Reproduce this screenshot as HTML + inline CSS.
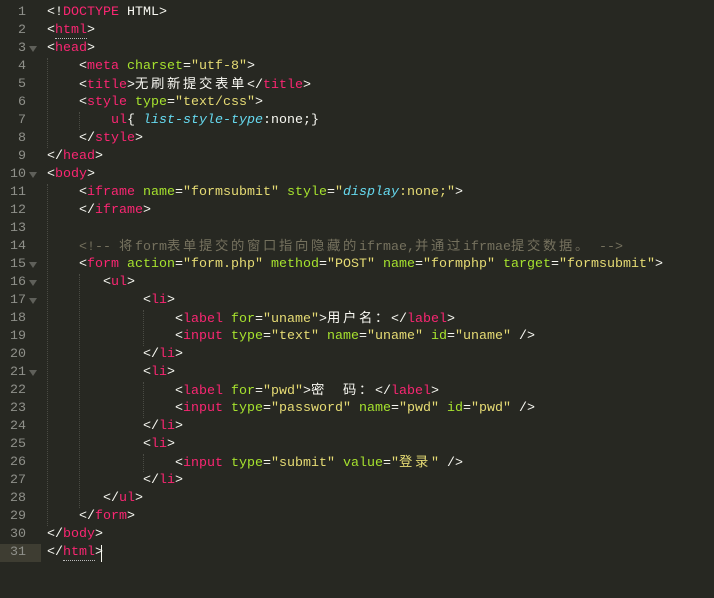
<!DOCTYPE html>
<html><head><meta charset="utf-8">
<style>
html,body{margin:0;padding:0;background:#272822;width:714px;height:598px;overflow:hidden}
body{position:relative;font-family:"Liberation Mono","Noto Sans CJK SC",monospace;font-size:13.33px}
.ln{position:absolute;left:0;width:26px;text-align:right;color:#8f908a;height:18px;line-height:18px}
.f{position:absolute;left:29px;width:0;height:0;border-left:4px solid transparent;border-right:4px solid transparent;border-top:6px solid #5f605a}
.l{position:absolute;height:18px;line-height:18px;white-space:pre;color:#f8f8f2}
.t{color:#f92672}.a{color:#a6e22e}.s{color:#e6db74}.c{color:#75715e}.p{color:#66d9ef;font-style:italic}
.k{font-family:"Noto Sans CJK SC",sans-serif;letter-spacing:2.67px;line-height:13px}
.g{position:absolute;width:0;border-left:1px dotted #4a4b44}
.u{border-bottom:1px dotted #bbb}
</style></head><body>
<div style="position:absolute;left:0;top:544px;width:41px;height:18px;background:#3e3d32"></div>
<div class="g" style="left:47px;top:58px;height:90px"></div>
<div class="g" style="left:79px;top:112px;height:18px"></div>
<div class="g" style="left:47px;top:184px;height:342px"></div>
<div class="g" style="left:79px;top:274px;height:234px"></div>
<div class="g" style="left:143px;top:310px;height:36px"></div>
<div class="g" style="left:143px;top:382px;height:36px"></div>
<div class="g" style="left:143px;top:454px;height:18px"></div>
<div style="position:absolute;left:101px;top:545px;width:1px;height:17px;background:#f8f8f0"></div>

<div class="ln" style="top:4px">1</div><div class="ln" style="top:22px">2</div><div class="ln" style="top:40px">3</div><div class="ln" style="top:58px">4</div><div class="ln" style="top:76px">5</div><div class="ln" style="top:94px">6</div><div class="ln" style="top:112px">7</div><div class="ln" style="top:130px">8</div><div class="ln" style="top:148px">9</div><div class="ln" style="top:166px">10</div><div class="ln" style="top:184px">11</div><div class="ln" style="top:202px">12</div><div class="ln" style="top:220px">13</div><div class="ln" style="top:238px">14</div><div class="ln" style="top:256px">15</div><div class="ln" style="top:274px">16</div><div class="ln" style="top:292px">17</div><div class="ln" style="top:310px">18</div><div class="ln" style="top:328px">19</div><div class="ln" style="top:346px">20</div><div class="ln" style="top:364px">21</div><div class="ln" style="top:382px">22</div><div class="ln" style="top:400px">23</div><div class="ln" style="top:418px">24</div><div class="ln" style="top:436px">25</div><div class="ln" style="top:454px">26</div><div class="ln" style="top:472px">27</div><div class="ln" style="top:490px">28</div><div class="ln" style="top:508px">29</div><div class="ln" style="top:526px">30</div><div class="ln" style="top:544px">31</div>
<div class="f" style="top:46px"></div><div class="f" style="top:172px"></div><div class="f" style="top:262px"></div><div class="f" style="top:280px"></div><div class="f" style="top:298px"></div><div class="f" style="top:370px"></div>

<div class="l" style="left:47px;top:4px">&lt;!<span class="t">DOCTYPE</span> HTML&gt;</div>
<div class="l" style="left:47px;top:22px">&lt;<span class="t u">html</span>&gt;</div>
<div class="l" style="left:47px;top:40px">&lt;<span class="t">head</span>&gt;</div>
<div class="l" style="left:79px;top:58px">&lt;<span class="t">meta</span> <span class="a">charset</span>=<span class="s">"utf-8"</span>&gt;</div>
<div class="l" style="left:79px;top:76px">&lt;<span class="t">title</span>&gt;<span class="k">无刷新提交表单</span>&lt;/<span class="t">title</span>&gt;</div>
<div class="l" style="left:79px;top:94px">&lt;<span class="t">style</span> <span class="a">type</span>=<span class="s">"text/css"</span>&gt;</div>
<div class="l" style="left:111px;top:112px"><span class="t">ul</span>{ <span class="p">list-style-type</span>:none;}</div>
<div class="l" style="left:79px;top:130px">&lt;/<span class="t">style</span>&gt;</div>
<div class="l" style="left:47px;top:148px">&lt;/<span class="t">head</span>&gt;</div>
<div class="l" style="left:47px;top:166px">&lt;<span class="t">body</span>&gt;</div>
<div class="l" style="left:79px;top:184px">&lt;<span class="t">iframe</span> <span class="a">name</span>=<span class="s">"formsubmit"</span> <span class="a">style</span>=<span class="s">"<span class="p">display</span>:none;"</span>&gt;</div>
<div class="l" style="left:79px;top:202px">&lt;/<span class="t">iframe</span>&gt;</div>
<div class="l c" style="left:79px;top:238px">&lt;!-- <span class="k">将</span>form<span class="k">表单提交的窗口指向隐藏的</span>ifrmae,<span class="k">并通过</span>ifrmae<span class="k">提交数据。</span> --&gt;</div>
<div class="l" style="left:79px;top:256px">&lt;<span class="t">form</span> <span class="a">action</span>=<span class="s">"form.php"</span> <span class="a">method</span>=<span class="s">"POST"</span> <span class="a">name</span>=<span class="s">"formphp"</span> <span class="a">target</span>=<span class="s">"formsubmit"</span>&gt;</div>
<div class="l" style="left:103px;top:274px">&lt;<span class="t">ul</span>&gt;</div>
<div class="l" style="left:143px;top:292px">&lt;<span class="t">li</span>&gt;</div>
<div class="l" style="left:175px;top:310px">&lt;<span class="t">label</span> <span class="a">for</span>=<span class="s">"uname"</span>&gt;<span class="k">用户名：</span>&lt;/<span class="t">label</span>&gt;</div>
<div class="l" style="left:175px;top:328px">&lt;<span class="t">input</span> <span class="a">type</span>=<span class="s">"text"</span> <span class="a">name</span>=<span class="s">"uname"</span> <span class="a">id</span>=<span class="s">"uname"</span> /&gt;</div>
<div class="l" style="left:143px;top:346px">&lt;/<span class="t">li</span>&gt;</div>
<div class="l" style="left:143px;top:364px">&lt;<span class="t">li</span>&gt;</div>
<div class="l" style="left:175px;top:382px">&lt;<span class="t">label</span> <span class="a">for</span>=<span class="s">"pwd"</span>&gt;<span class="k">密　码：</span>&lt;/<span class="t">label</span>&gt;</div>
<div class="l" style="left:175px;top:400px">&lt;<span class="t">input</span> <span class="a">type</span>=<span class="s">"password"</span> <span class="a">name</span>=<span class="s">"pwd"</span> <span class="a">id</span>=<span class="s">"pwd"</span> /&gt;</div>
<div class="l" style="left:143px;top:418px">&lt;/<span class="t">li</span>&gt;</div>
<div class="l" style="left:143px;top:436px">&lt;<span class="t">li</span>&gt;</div>
<div class="l" style="left:175px;top:454px">&lt;<span class="t">input</span> <span class="a">type</span>=<span class="s">"submit"</span> <span class="a">value</span>=<span class="s">"<span class="k">登录</span>"</span> /&gt;</div>
<div class="l" style="left:143px;top:472px">&lt;/<span class="t">li</span>&gt;</div>
<div class="l" style="left:103px;top:490px">&lt;/<span class="t">ul</span>&gt;</div>
<div class="l" style="left:79px;top:508px">&lt;/<span class="t">form</span>&gt;</div>
<div class="l" style="left:47px;top:526px">&lt;/<span class="t">body</span>&gt;</div>
<div class="l" style="left:47px;top:544px">&lt;/<span class="t u">html</span>&gt;</div>
</body></html>
